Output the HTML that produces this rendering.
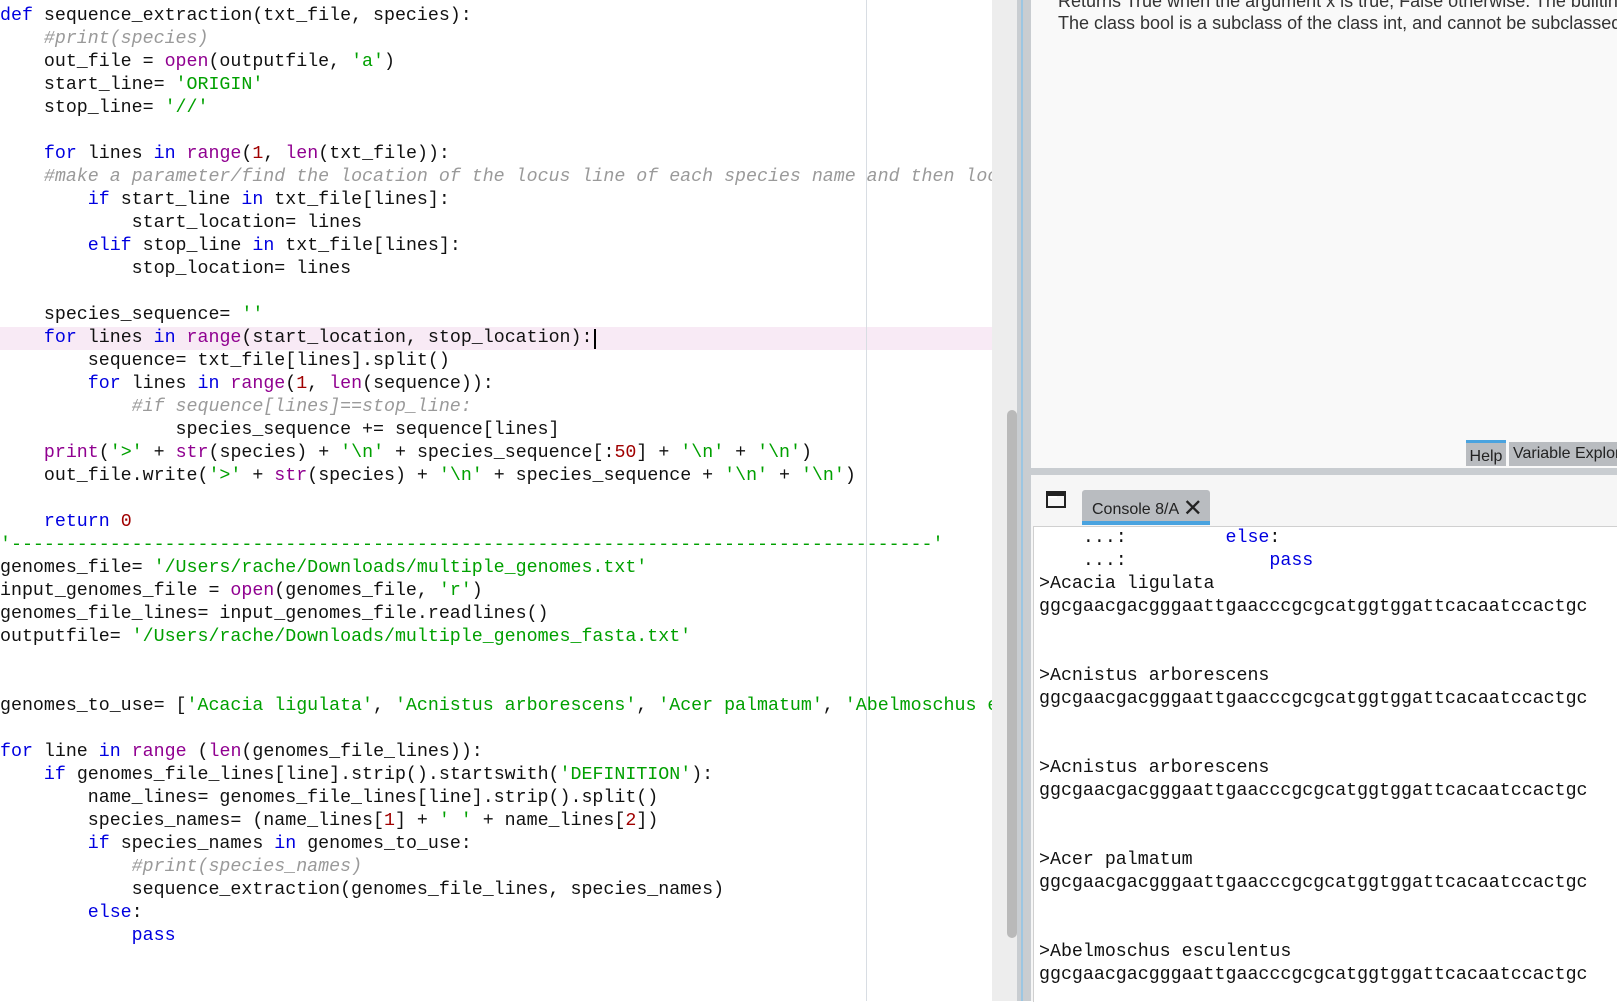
<!DOCTYPE html>
<html><head><meta charset="utf-8"><style>
html,body{margin:0;padding:0;width:1617px;height:1001px;overflow:hidden;background:#fff;}
.ed{position:absolute;left:0;top:0;width:992px;height:1001px;overflow:hidden;background:#fff;}
pre{margin:0;font-family:"Liberation Mono",monospace;}
.code{position:absolute;left:0;top:5px;font-size:18.3px;line-height:23px;color:#111;white-space:pre;}
.k{color:#0000e0}.b{color:#900090}.s{color:#00a000}.c{color:#9a9a9a;font-style:italic}.n{color:#a00000}
.hl{position:absolute;left:0;top:327px;width:992px;height:23px;background:#f8eaf5;}
.margin{position:absolute;left:866px;top:0;width:1px;height:1001px;background:#d8dde3;}
.cur{position:absolute;left:594px;top:329px;width:2px;height:20px;background:#000;}
.sb{position:absolute;left:992px;top:0;width:25px;height:1001px;background:#ededed;}
.thumb{position:absolute;left:1007px;top:410px;width:10px;height:528px;background:#b9b9b9;border-radius:5px;}
.sep1{position:absolute;left:1017px;top:0;width:4px;height:1001px;background:#c9cdd1;}
.sep2{position:absolute;left:1021px;top:0;width:2px;height:1001px;background:#9cc6e2;}
.sep3{position:absolute;left:1023px;top:0;width:8px;height:1001px;background:#c9cdd1;}
.help{position:absolute;left:1031px;top:0;width:586px;height:468px;background:#f9f9f9;overflow:hidden;}
.helptxt{position:absolute;left:27px;top:-10px;font-family:"Liberation Sans",sans-serif;font-size:18px;line-height:22px;color:#333;white-space:nowrap;}
.div{position:absolute;left:1031px;top:468px;width:586px;height:7px;background:#c9cdd1;}
.tab{position:absolute;font-family:"Liberation Sans",sans-serif;font-size:16px;color:#222;background:#b9bcc0;text-align:center;white-space:nowrap;overflow:hidden;}
.cpan{position:absolute;left:1031px;top:475px;width:586px;height:526px;background:#f6f6f6;}
.cons{position:absolute;left:1033px;top:526px;width:584px;height:475px;background:#fff;border-top:1px solid #d0d0d0;border-left:1px solid #d0d0d0;overflow:hidden;}
.ctext{position:absolute;left:5px;top:0px;font-size:18.3px;line-height:23px;color:#111;white-space:pre;}
</style></head><body>
<div class="ed">
<div class="hl"></div>
<div class="margin"></div>
<pre class="code"><span class="k">def</span> sequence_extraction(txt_file, species):
    <span class="c">#print(species)</span>
    out_file = <span class="b">open</span>(outputfile, <span class="s">'a'</span>)
    start_line= <span class="s">'ORIGIN'</span>
    stop_line= <span class="s">'//'</span>

    <span class="k">for</span> lines <span class="k">in</span> <span class="b">range</span>(<span class="n">1</span>, <span class="b">len</span>(txt_file)):
    <span class="c">#make a parameter/find the location of the locus line of each species name and then locate</span>
        <span class="k">if</span> start_line <span class="k">in</span> txt_file[lines]:
            start_location= lines
        <span class="k">elif</span> stop_line <span class="k">in</span> txt_file[lines]:
            stop_location= lines

    species_sequence= <span class="s">''</span>
    <span class="k">for</span> lines <span class="k">in</span> <span class="b">range</span>(start_location, stop_location):
        sequence= txt_file[lines].split()
        <span class="k">for</span> lines <span class="k">in</span> <span class="b">range</span>(<span class="n">1</span>, <span class="b">len</span>(sequence)):
            <span class="c">#if sequence[lines]==stop_line:</span>
                species_sequence += sequence[lines]
    <span class="b">print</span>(<span class="s">'&gt;'</span> + <span class="b">str</span>(species) + <span class="s">'\n'</span> + species_sequence[:<span class="n">50</span>] + <span class="s">'\n'</span> + <span class="s">'\n'</span>)
    out_file.write(<span class="s">'&gt;'</span> + <span class="b">str</span>(species) + <span class="s">'\n'</span> + species_sequence + <span class="s">'\n'</span> + <span class="s">'\n'</span>)

    <span class="k">return</span> <span class="n">0</span>
<span class="s">'------------------------------------------------------------------------------------'</span>
genomes_file= <span class="s">'/Users/rache/Downloads/multiple_genomes.txt'</span>
input_genomes_file = <span class="b">open</span>(genomes_file, <span class="s">'r'</span>)
genomes_file_lines= input_genomes_file.readlines()
outputfile= <span class="s">'/Users/rache/Downloads/multiple_genomes_fasta.txt'</span>


genomes_to_use= [<span class="s">'Acacia ligulata'</span>, <span class="s">'Acnistus arborescens'</span>, <span class="s">'Acer palmatum'</span>, <span class="s">'Abelmoschus esculentus'</span>]

<span class="k">for</span> line <span class="k">in</span> <span class="b">range</span> (<span class="b">len</span>(genomes_file_lines)):
    <span class="k">if</span> genomes_file_lines[line].strip().startswith(<span class="s">'DEFINITION'</span>):
        name_lines= genomes_file_lines[line].strip().split()
        species_names= (name_lines[<span class="n">1</span>] + <span class="s">' '</span> + name_lines[<span class="n">2</span>])
        <span class="k">if</span> species_names <span class="k">in</span> genomes_to_use:
            <span class="c">#print(species_names)</span>
            sequence_extraction(genomes_file_lines, species_names)
        <span class="k">else</span>:
            <span class="k">pass</span></pre>
<div class="cur"></div>
</div>
<div class="sb"></div>
<div class="thumb"></div>
<div class="sep1"></div><div class="sep2"></div><div class="sep3"></div>
<div class="help">
<div class="helptxt">Returns True when the argument x is true, False otherwise. The builtins True and False<br>The class bool is a subclass of the class int, and cannot be subclassed.</div>
<div class="tab" style="left:435px;top:440px;width:40px;height:26px;line-height:28px;border-top:3px solid #4aa3df;box-sizing:border-box;">Help</div>
<div class="tab" style="left:478px;top:442px;width:130px;height:24px;line-height:24px;text-align:left;padding-left:4px;">Variable Explorer</div>
</div>
<div class="div"></div>
<div class="cpan">
<svg style="position:absolute;left:15px;top:16px" width="20" height="17" viewBox="0 0 20 17"><rect x="1" y="1" width="18" height="15" fill="none" stroke="#222" stroke-width="2"/><rect x="1" y="1" width="18" height="4" fill="#222"/><rect x="2" y="5" width="9" height="2" fill="#fff"/></svg>
<div class="tab" style="left:51px;top:15px;width:128px;height:35px;line-height:34px;border-radius:3px 3px 0 0;border-bottom:4px solid #4aa3df;box-sizing:border-box;text-align:left;padding-left:10px;">Console 8/A <span style="font-size:24px;position:relative;top:2px;">✕</span></div>
</div>
<div class="cons">
<pre class="ctext">    ...:         <span class="k">else</span>:
    ...:             <span class="k">pass</span>
&gt;Acacia ligulata
ggcgaacgacgggaattgaacccgcgcatggtggattcacaatccactgc


&gt;Acnistus arborescens
ggcgaacgacgggaattgaacccgcgcatggtggattcacaatccactgc


&gt;Acnistus arborescens
ggcgaacgacgggaattgaacccgcgcatggtggattcacaatccactgc


&gt;Acer palmatum
ggcgaacgacgggaattgaacccgcgcatggtggattcacaatccactgc


&gt;Abelmoschus esculentus
ggcgaacgacgggaattgaacccgcgcatggtggattcacaatccactgc</pre>
</div>
</body></html>
